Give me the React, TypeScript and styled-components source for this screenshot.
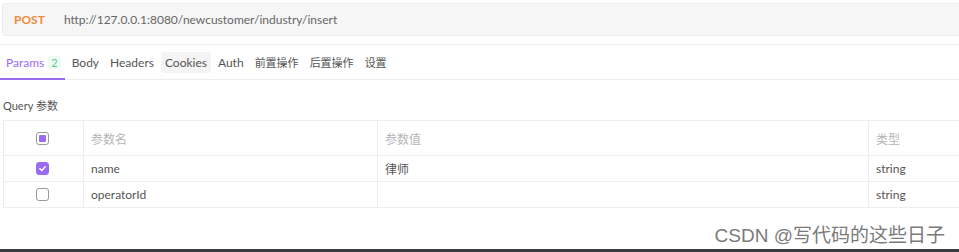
import React from "react";
import styled, { createGlobalStyle } from "styled-components";

const Global = createGlobalStyle`
  html, body { margin: 0; padding: 0; background: #ffffff; }
  body { font-family: Lato, "Noto Sans CJK SC", sans-serif; width: 959px; height: 252px; overflow: hidden; }
`;

const Page = styled.div`
  width: 959px;
  height: 252px;
  display: flex;
  flex-direction: column;
  position: relative;
  background: #fff;
`;

const UrlBar = styled.div`
  margin: 3px 0 0 2px;
  height: 31px;
  background: #f6f6f6;
  border: 1px solid #ececec;
  border-right: none;
  border-radius: 4px 0 0 4px;
  display: flex;
  align-items: center;
  padding-left: 11px;
  gap: 18px;
`;

const Method = styled.span`
  color: #f08b3b;
  font-weight: 700;
  font-size: 12px;
  width: 32px;
`;

const Url = styled.span`
  color: #666;
  font-size: 12px;
`;

const TabBar = styled.div`
  margin-top: 8px;
  height: 34px;
  border-top: 1px solid #f0f0f0;
  border-bottom: 1px solid #ededed;
  display: flex;
  align-items: center;
  padding-left: 2px;
  gap: 3px;
`;

const Tab = styled.div<{ $active?: boolean; $hover?: boolean }>`
  position: relative;
  height: 100%;
  display: flex;
  align-items: center;
  padding: 0 4px;
  font-size: 12px;
  color: ${(p) => (p.$active ? "#9b6cf0" : "#555")};
  &::before {
    content: "";
    display: ${(p) => (p.$hover ? "block" : "none")};
    position: absolute;
    left: 0;
    right: 0;
    top: 7px;
    bottom: 6px;
    background: #f4f4f4;
    border-radius: 3px;
    z-index: 0;
  }
  &::after {
    content: "";
    display: ${(p) => (p.$active ? "block" : "none")};
    position: absolute;
    left: -2px;
    right: 0;
    bottom: -1px;
    height: 2px;
    background: #9b6cf0;
  }
  & > span { position: relative; z-index: 1; }
`;

const Cjk = styled.span`
  font-size: 11px;
`;

const Badge = styled.span`
  margin-left: 4px;
  padding: 0 3px;
  border-radius: 3px;
  background: #eefaf3;
  color: #5fc98e;
  font-size: 11px;
`;

const SectionTitle = styled.div`
  margin: 16px 0 0 3px;
  height: 18px;
  font-size: 11px;
  color: #555;
  display: flex;
  align-items: center;
`;

const Table = styled.div`
  margin: 6px 0 0 3px;
  border-top: 1px solid #eeeeee;
  border-left: 1px solid #eeeeee;
  display: grid;
  grid-template-columns: 80px 294px 491px 1fr;
`;

const Cell = styled.div<{ $h: number; $head?: boolean; $center?: boolean }>`
  height: ${(p) => p.$h}px;
  border-right: 1px solid #eeeeee;
  border-bottom: 1px solid #eeeeee;
  display: flex;
  align-items: center;
  justify-content: ${(p) => (p.$center ? "center" : "flex-start")};
  padding-left: ${(p) => (p.$center ? 0 : 7)}px;
  font-size: 12px;
  color: ${(p) => (p.$head ? "#b5b5b5" : "#555")};
  &:nth-child(4n) { border-right: none; }
`;

const Box = styled.div<{ $state: "none" | "partial" | "checked" }>`
  width: 11px;
  height: 11px;
  border-radius: 3px;
  border: 1px solid ${(p) => (p.$state === "checked" ? "#9b6cf0" : "#999")};
  background: ${(p) => (p.$state === "checked" ? "#9b6cf0" : "#fff")};
  display: flex;
  align-items: center;
  justify-content: center;
  margin-left: -2px;
`;

const Inner = styled.div`
  width: 7px;
  height: 7px;
  border-radius: 1px;
  background: #9b6cf0;
`;

const Watermark = styled.div`
  position: absolute;
  right: 14px;
  bottom: 5px;
  font-family: "Liberation Sans", "Noto Sans CJK SC", sans-serif;
  font-size: 19px;
  color: #7a7a7a;
  text-shadow: 0 0 2px #fff;
`;

const BottomBar = styled.div`
  position: absolute;
  left: 0;
  right: 0;
  bottom: 0;
  height: 3px;
  background: #3a3c3f;
`;

function Check({ state }: { state: "none" | "partial" | "checked" }) {
  return (
    <Box $state={state}>
      {state === "partial" && <Inner />}
      {state === "checked" && (
        <svg width="9" height="9" viewBox="0 0 10 10">
          <path d="M2 5.2 L4.2 7.2 L8 3" fill="none" stroke="#fff" strokeWidth="1.6" strokeLinecap="round" strokeLinejoin="round" />
        </svg>
      )}
    </Box>
  );
}

const rows = [
  { on: true, name: "name", value: "律师", type: "string" },
  { on: false, name: "operatorId", value: "", type: "string" },
];

export default function App() {
  return (
    <>
      <Global />
      <Page>
        <UrlBar>
          <Method>POST</Method>
          <Url>http://127.0.0.1:8080/newcustomer/industry/insert</Url>
        </UrlBar>
        <TabBar>
          <Tab $active>
            <span>Params</span>
            <Badge>2</Badge>
          </Tab>
          <Tab><span>Body</span></Tab>
          <Tab><span>Headers</span></Tab>
          <Tab $hover><span>Cookies</span></Tab>
          <Tab><span>Auth</span></Tab>
          <Tab><Cjk>前置操作</Cjk></Tab>
          <Tab><Cjk>后置操作</Cjk></Tab>
          <Tab><Cjk>设置</Cjk></Tab>
        </TabBar>
        <SectionTitle>Query 参数</SectionTitle>
        <Table>
          <Cell $h={34} $center><Check state="partial" /></Cell>
          <Cell $h={34} $head>参数名</Cell>
          <Cell $h={34} $head>参数值</Cell>
          <Cell $h={34} $head>类型</Cell>
          {rows.map((r) => (
            <React.Fragment key={r.name}>
              <Cell $h={25} $center><Check state={r.on ? "checked" : "none"} /></Cell>
              <Cell $h={25}>{r.name}</Cell>
              <Cell $h={25}>{r.value}</Cell>
              <Cell $h={25}>{r.type}</Cell>
            </React.Fragment>
          ))}
        </Table>
        <Watermark>CSDN @写代码的这些日子</Watermark>
        <BottomBar />
      </Page>
    </>
  );
}
